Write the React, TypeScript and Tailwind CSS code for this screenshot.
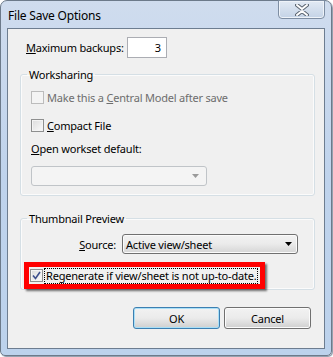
import React from 'react'

const font = { fontFamily: '"Segoe UI", "Noto Sans", sans-serif' }

function Box({ checked, disabled }: { checked?: boolean; disabled?: boolean }) {
  return (
    <span
      className={
        'flex h-[13px] w-[13px] shrink-0 items-center justify-center border ' +
        (disabled
          ? 'border-[#bcbcbc] bg-[#f4f4f4]'
          : 'border-[#8e8f8f] bg-gradient-to-br from-[#dcdcdc] to-[#fbfbfb] shadow-[inset_0_0_0_1px_#f4f4f4]')
      }
    >
      {checked && (
        <svg width="9" height="9" viewBox="0 0 9 9">
          <path d="M1 4.5 L3.5 7.5 L8 1" fill="none" stroke="#3d4f8c" strokeWidth="1.6" />
        </svg>
      )}
    </span>
  )
}

function Arrow({ color }: { color: string }) {
  return (
    <svg width="7" height="4" viewBox="0 0 7 4">
      <path d="M0 0 H7 L3.5 4 Z" fill={color} />
    </svg>
  )
}

function Btn({ label, primary }: { label: string; primary?: boolean }) {
  return (
    <button
      className={
        'h-[22px] w-[87px] rounded-[3px] border bg-gradient-to-b from-[#f2f2f2] via-[#ebebeb] to-[#cfcfcf] text-[11px] text-black ' +
        (primary ? 'border-[#3c7fb1] shadow-[inset_0_0_0_1px_#a9dff7]' : 'border-[#707070] shadow-[inset_0_0_0_1px_#fbfbfb]')
      }
    >
      {label}
    </button>
  )
}

export default function App() {
  return (
    <div style={font} className="h-[357px] w-[333px] bg-white tracking-[-0.2px]">
      <div className="flex h-[356px] w-[332px] flex-col rounded-t-[7px] rounded-b-[5px] border border-[#6c7a8a] bg-gradient-to-b from-[#cfdcee] via-[#bfd3ec] to-[#bcd2ec] shadow-[1px_1px_1px_#8a98a8]">
        <div className="flex h-[27px] items-start justify-between pl-[7px] pr-[6px]">
          <span className="mt-[7px] text-[12px] leading-[15px] text-black">File Save Options</span>
          <div className="flex h-[19px] w-[47px] -mt-px items-center justify-center rounded-b-[4px] border border-[#7e8ea3] bg-gradient-to-b from-[#e2eaf4] to-[#c4d3e6] shadow-[inset_0_0_0_1px_#eef3f9]">
            <svg width="14" height="12" viewBox="0 0 14 12">
              <path d="M2 1 L7 5 L12 1 M2 11 L7 7 L12 11" fill="none" stroke="#5a6470" strokeWidth="4" strokeLinecap="round" />
              <path d="M2 1 L7 5 L12 1 M2 11 L7 7 L12 11" fill="none" stroke="#ffffff" strokeWidth="2" strokeLinecap="round" />
            </svg>
          </div>
        </div>
        <div className="mx-[6px] mb-[6px] flex flex-1 flex-col border border-[#6d7d90] bg-[#f0f0f0] text-[11px] leading-[15px] text-black">
          <div className="mt-[8px] flex items-center gap-[3px] pl-[18px]">
            <span className="whitespace-nowrap">
              <u>M</u>aximum backups:
            </span>
            <div className="h-[21px] w-[40px] border border-[#abadb3] border-t-[#abadb3] bg-white pr-[5px] text-right leading-[19px]">3</div>
          </div>

          <fieldset className="ml-[12px] mt-[9px] w-[295px] rounded-[3px] border border-[#d5dfe5] p-0 shadow-[inset_0_0_0_1px_#fbfbfb]">
            <legend className="ml-[6px] px-[2px] leading-[15px]">Worksharing</legend>
            <div className="flex flex-col pl-[10px]">
              <div className="mt-[7px] flex h-[16px] items-center gap-[3px] text-[#6d6d6d]">
                <Box disabled />
                <span className="whitespace-nowrap">
                  Make this a <u>C</u>entral Model after save
                </span>
              </div>
              <div className="mt-[12px] flex h-[16px] items-center gap-[3px]">
                <Box />
                <span>
                  <u>C</u>ompact File
                </span>
              </div>
              <div className="mt-[8px] h-[16px]">
                <u>O</u>pen workset default:
              </div>
              <div className="mb-[9px] mt-[9px] flex h-[20px] w-[176px] items-center justify-end rounded-[3px] border border-[#c0c4c8] bg-[#f4f4f4] pr-[7px]">
                <Arrow color="#9a9a9a" />
              </div>
            </div>
          </fieldset>

          <fieldset className="ml-[12px] mt-[15px] w-[295px] rounded-[3px] border border-[#d5dfe5] p-0 shadow-[inset_0_0_0_1px_#fbfbfb]">
            <legend className="ml-[6px] px-[2px] leading-[15px]">Thumbnail Preview</legend>
            <div className="mt-[8px] flex items-center">
              <span className="w-[101px] pr-[6px] text-right">
                <u>S</u>ource:
              </span>
              <div className="flex h-[20px] w-[176px] items-center justify-between rounded-[3px] border border-[#707070] bg-gradient-to-b from-[#f2f2f2] via-[#ebebeb] to-[#d5d5d5] pl-[3px] pr-[5px] shadow-[inset_0_0_0_1px_#fbfbfb]">
                <span>Active view/sheet</span>
                <Arrow color="#000000" />
              </div>
            </div>
            <div className="mb-0 ml-[3px] mt-[8px] flex h-[27px] w-[241px] items-center border-[5px] border-[#ff0000] pl-px shadow-[2px_2px_2px_rgba(0,0,0,0.55)]">
              <Box checked />
              <span className="ml-px whitespace-nowrap border border-dotted border-black px-px leading-[14px]">
                Regenerate if view/sheet is not up-to-date.
              </span>
            </div>
          </fieldset>

          <div className="mt-[17px] flex justify-end gap-[4px] pr-[13px]">
            <Btn label="OK" primary />
            <Btn label="Cancel" />
          </div>
        </div>
      </div>
    </div>
  )
}
